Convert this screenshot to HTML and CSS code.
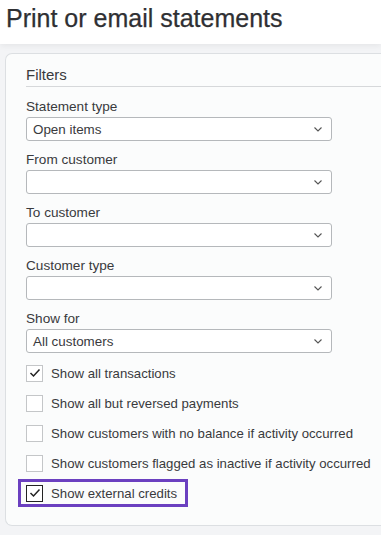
FILE: index.html
```html
<!DOCTYPE html>
<html>
<head>
<meta charset="utf-8">
<link rel="stylesheet" href="styles.css">
</head>
<body>
<div class="header"><h1 class="title">Print or email statements</h1></div>
<div class="page">
  <div class="panel">
    <div class="panel-title">Filters</div>
    <div class="field">
      <div class="label">Statement type</div>
      <div class="select"><span>Open items</span><svg class="chev" width="8" height="5" viewBox="0 0 8 5"><path d="M0.5 0.5 L4 4 L7.5 0.5" fill="none" stroke="#555" stroke-width="1.1"/></svg></div>
    </div>
    <div class="field">
      <div class="label">From customer</div>
      <div class="select"><span></span><svg class="chev" width="8" height="5" viewBox="0 0 8 5"><path d="M0.5 0.5 L4 4 L7.5 0.5" fill="none" stroke="#555" stroke-width="1.1"/></svg></div>
    </div>
    <div class="field">
      <div class="label">To customer</div>
      <div class="select"><span></span><svg class="chev" width="8" height="5" viewBox="0 0 8 5"><path d="M0.5 0.5 L4 4 L7.5 0.5" fill="none" stroke="#555" stroke-width="1.1"/></svg></div>
    </div>
    <div class="field">
      <div class="label">Customer type</div>
      <div class="select"><span></span><svg class="chev" width="8" height="5" viewBox="0 0 8 5"><path d="M0.5 0.5 L4 4 L7.5 0.5" fill="none" stroke="#555" stroke-width="1.1"/></svg></div>
    </div>
    <div class="field">
      <div class="label">Show for</div>
      <div class="select"><span>All customers</span><svg class="chev" width="8" height="5" viewBox="0 0 8 5"><path d="M0.5 0.5 L4 4 L7.5 0.5" fill="none" stroke="#555" stroke-width="1.1"/></svg></div>
    </div>
    <div class="checks">
      <div class="check"><span class="box"><svg width="12" height="10" viewBox="0 0 12 10"><path d="M1.5 5 L4.5 8 L10.5 1.5" fill="none" stroke="#222" stroke-width="1.5"/></svg></span><span>Show all transactions</span></div>
      <div class="check"><span class="box"></span><span>Show all but reversed payments</span></div>
      <div class="check"><span class="box"></span><span>Show customers with no balance if activity occurred</span></div>
      <div class="check"><span class="box"></span><span>Show customers flagged as inactive if activity occurred</span></div>
      <div class="check highlight"><span class="box dark"><svg width="12" height="10" viewBox="0 0 12 10"><path d="M1.5 5 L4.5 8 L10.5 1.5" fill="none" stroke="#222" stroke-width="1.5"/></svg></span><span>Show external credits</span></div>
    </div>
  </div>
</div>
</body>
</html>
```
FILE: styles.css
```css
html, body {
  margin: 0;
  padding: 0;
}
body {
  font-family: "Liberation Sans", Arial, sans-serif;
  color: #393a3d;
  background: #f3f4f6;
  width: 381px;
  height: 535px;
  overflow: hidden;
}
.header {
  background: #fff;
  height: 44px;
  padding-left: 6px;
  box-shadow: 0 2px 6px rgba(0,0,0,0.06);
  position: relative;
}
.title {
  margin: 0;
  font-weight: normal;
  font-size: 25px;
  line-height: 36px;
  color: #2f3033;
  -webkit-text-stroke: 0.25px #2f3033;
}
.page {
  padding: 9px 0 0 5px;
}
.panel {
  background: #fbfcfc;
  border: 1px solid #dcdfe2;
  border-right: none;
  border-radius: 7px 0 0 7px;
  padding: 11px 0 16px 20px;
  height: 444px;
}
.panel-title {
  font-size: 15px;
  line-height: 20px;
  color: #393a3d;
  padding-bottom: 1px;
  border-bottom: 1px solid #d6d8da;
  margin-bottom: 12px;
}
.field {
  margin-bottom: 11px;
}
.label {
  font-size: 13.6px;
  line-height: 16px;
  color: #393a3d;
  margin-bottom: 2px;
}
.select {
  height: 22px;
  border: 1px solid #b5b8bb;
  border-radius: 3px;
  background: #fff;
  display: flex;
  align-items: center;
  justify-content: space-between;
  padding: 0 9px 0 6px;
  box-sizing: content-box;
  width: 289px;
  font-size: 13.4px;
  color: #393a3d;
}
.chev {
  display: block;
  margin-top: 1px;
}
.checks {
  display: flex;
  flex-direction: column;
  gap: 12px;
  margin-top: 0;
}
.check {
  display: flex;
  align-items: center;
  gap: 8px;
  font-size: 13.2px;
  color: #393a3d;
  height: 18px;
}
.box {
  width: 15px;
  height: 15px;
  border: 1px solid #c4c6c8;
  background: #fff;
  display: flex;
  align-items: center;
  justify-content: center;
  flex: none;
}
.box.dark {
  border-color: #222;
}
.highlight {
  align-self: flex-start;
  height: 22px;
  outline: 3px solid #6b40c0;
  outline-offset: 0;
  margin-left: -5px;
  padding: 0 8px 0 5px;
  margin-top: -2px;
}
```
